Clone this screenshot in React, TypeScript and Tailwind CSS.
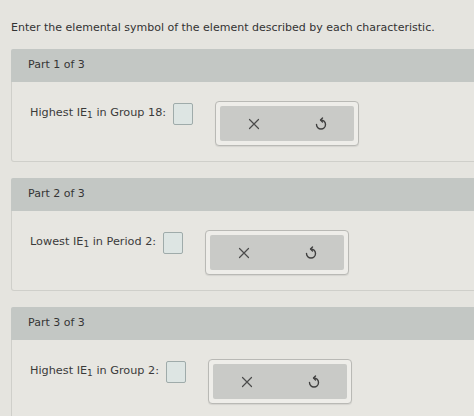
import React from 'react';

const parts = [
  { label: 'Highest', rest: 'in Group 18:' },
  { label: 'Lowest', rest: 'in Period 2:' },
  { label: 'Highest', rest: 'in Group 2:' },
];

const XIcon = () => (
  <svg width="12" height="12" viewBox="0 0 12 12" fill="none" stroke="#4b4b4b" strokeWidth="1.2" strokeLinecap="round">
    <path d="M1.5 1.5L10.5 10.5M10.5 1.5L1.5 10.5" />
  </svg>
);

const UndoIcon = () => (
  <svg width="12" height="13" viewBox="0 0 12 13" fill="none" stroke="#3f3f3f" strokeWidth="1.4" strokeLinecap="round" strokeLinejoin="round">
    {/* arc from the top, round the right and bottom, to the left side */}
    <path d="M6 3A4.5 4.5 0 1 1 1.5 7.5" />
    <path d="M7.5 1L5.5 3L7.5 5" />
  </svg>
);

const Part: React.FC<{ n: number; label: string; rest: string }> = ({ n, label, rest }) => (
  <div className="w-[480px]">
    <div className="h-[33px] bg-[#c3c7c4] rounded-t-[2px] flex items-center pl-[17px] text-[11px] text-[#353535]">
      Part {n} of 3
    </div>
    <div className="h-[80px] bg-[#e7e6e1] border border-t-0 border-[#cfcfca] rounded-b-[3px] flex items-start pl-[18px] pt-[19px]">
      <div className="flex items-center h-[23px] mt-[1px] text-[11.25px] text-[#3a3a3a]">
        <span>
          {label} IE<sub className="text-[9px] relative top-[2px]">1</sub> {rest}
        </span>
        <div className="ml-[7px] w-[20px] h-[22px] bg-[#dde5e3] border border-[#9fabaa] rounded-[2px]" />
      </div>
      <div className="ml-[22px] w-[144px] h-[45px] p-[4px] bg-[#eeede9] border border-[#b9b9b5] rounded-[4px] shadow-[0_1px_1px_rgba(0,0,0,0.08)]">
        <div className="h-full bg-[#c9cac7] rounded-[2px] flex">
          <div className="flex-1 flex items-center justify-center">
            <XIcon />
          </div>
          <div className="flex-1 flex items-center justify-center">
            <UndoIcon />
          </div>
        </div>
      </div>
    </div>
  </div>
);

export default function App() {
  return (
    <div
      className="w-[474px] h-[416px] overflow-hidden bg-[#e5e4df] pl-[11px] pt-[21px]"
      style={{ fontFamily: '"DejaVu Sans", Verdana, sans-serif' }}
    >
      <p className="text-[11px] text-[#333] leading-[13px] mb-[15px]">
        Enter the elemental symbol of the element described by each characteristic.
      </p>
      <div className="flex flex-col gap-[16px]">
        {parts.map((p, i) => (
          <Part key={i} n={i + 1} label={p.label} rest={p.rest} />
        ))}
      </div>
    </div>
  );
}
